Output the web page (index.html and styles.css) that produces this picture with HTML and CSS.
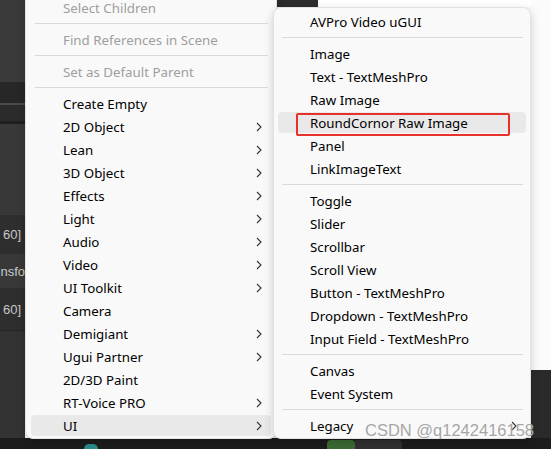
FILE: index.html
```html
<!DOCTYPE html>
<html>
<head>
<meta charset="utf-8">
<link rel="stylesheet" href="styles.css">
</head>
<body>
<div class="scene">
  <div class="backdrop">
    <div class="left-strip">
      <div class="band b1"></div>
      <div class="band b2"></div>
      <div class="band b3"></div>
      <div class="band b4"></div>
      <div class="band b5"></div>
      <div class="band b6"></div>
      <div class="band b7"><span class="num">60]</span></div>
      <div class="band b8"><span class="cut">nsfo</span></div>
      <div class="band b9"><span class="num">60]</span></div>
      <div class="band b10"></div>
    </div>
    <div class="middle">
      <div class="top-row">
        <div class="t-light"></div>
        <div class="t-dark"></div>
        <div class="t-white"></div>
      </div>
    </div>
    <div class="right-strip">
      <div class="r-light"></div>
      <div class="r-dark"></div>
    </div>
    <div class="bottom-strip">
      <div class="teal"></div>
      <div class="green"></div>
      <div class="greybox"></div>
    </div>
  </div>

  <div class="menu menu-left">
    <div class="item disabled">Select Children</div>
    <div class="sep"></div>
    <div class="item disabled">Find References in Scene</div>
    <div class="sep"></div>
    <div class="item disabled">Set as Default Parent</div>
    <div class="sep"></div>
    <div class="item">Create Empty</div>
    <div class="item sub">2D Object<svg class="chev" viewBox="0 0 6 10"><polyline points="1,1 5,5 1,9"/></svg></div>
    <div class="item sub">Lean<svg class="chev" viewBox="0 0 6 10"><polyline points="1,1 5,5 1,9"/></svg></div>
    <div class="item sub">3D Object<svg class="chev" viewBox="0 0 6 10"><polyline points="1,1 5,5 1,9"/></svg></div>
    <div class="item sub">Effects<svg class="chev" viewBox="0 0 6 10"><polyline points="1,1 5,5 1,9"/></svg></div>
    <div class="item sub">Light<svg class="chev" viewBox="0 0 6 10"><polyline points="1,1 5,5 1,9"/></svg></div>
    <div class="item sub">Audio<svg class="chev" viewBox="0 0 6 10"><polyline points="1,1 5,5 1,9"/></svg></div>
    <div class="item sub">Video<svg class="chev" viewBox="0 0 6 10"><polyline points="1,1 5,5 1,9"/></svg></div>
    <div class="item sub">UI Toolkit<svg class="chev" viewBox="0 0 6 10"><polyline points="1,1 5,5 1,9"/></svg></div>
    <div class="item">Camera</div>
    <div class="item sub">Demigiant<svg class="chev" viewBox="0 0 6 10"><polyline points="1,1 5,5 1,9"/></svg></div>
    <div class="item sub">Ugui Partner<svg class="chev" viewBox="0 0 6 10"><polyline points="1,1 5,5 1,9"/></svg></div>
    <div class="item">2D/3D Paint</div>
    <div class="item sub">RT-Voice PRO<svg class="chev" viewBox="0 0 6 10"><polyline points="1,1 5,5 1,9"/></svg></div>
    <div class="item sub active">UI<svg class="chev" viewBox="0 0 6 10"><polyline points="1,1 5,5 1,9"/></svg></div>
  </div>

  <div class="menu menu-right">
    <div class="item">AVPro Video uGUI</div>
    <div class="sep"></div>
    <div class="item">Image</div>
    <div class="item">Text - TextMeshPro</div>
    <div class="item">Raw Image</div>
    <div class="item active">RoundCornor Raw Image<span class="mark"></span></div>
    <div class="item">Panel</div>
    <div class="item">LinkImageText</div>
    <div class="sep"></div>
    <div class="item">Toggle</div>
    <div class="item">Slider</div>
    <div class="item">Scrollbar</div>
    <div class="item">Scroll View</div>
    <div class="item">Button - TextMeshPro</div>
    <div class="item">Dropdown - TextMeshPro</div>
    <div class="item">Input Field - TextMeshPro</div>
    <div class="sep"></div>
    <div class="item">Canvas</div>
    <div class="item">Event System</div>
    <div class="sep"></div>
    <div class="item sub">Legacy<svg class="chev" viewBox="0 0 6 10"><polyline points="1,1 5,5 1,9"/></svg></div>
  </div>

  <div class="watermark">CSDN @q1242416158</div>
</div>
</body>
</html>
```

FILE: styles.css
```css
* { box-sizing: border-box; }
html, body { margin: 0; padding: 0; }
body { background: #1e1e1e; overflow: hidden; }

.scene {
  position: relative;
  width: 551px;
  height: 449px;
  overflow: hidden;
  font-family: "Noto Sans", "Open Sans", sans-serif;
}

/* ---------- backdrop ---------- */
.backdrop {
  display: grid;
  grid-template-columns: 25px 506px 20px;
  grid-template-rows: 438px 11px;
  width: 551px;
  height: 449px;
}
.left-strip {
  display: flex;
  flex-direction: column;
  font-family: "Liberation Sans", sans-serif;
  font-size: 13px;
  color: #c8c8c8;
  overflow: hidden;
}
.band { flex: none; position: relative; display: flex; align-items: center; }
.b1 { height: 82px; background: #3a3a3a; }
.b2 { height: 21px; background: #272727; }
.b3 { height: 2px; background: #4a4a4a; }
.b4 { height: 16px; background: #2b2b2b; }
.b5 { height: 3px; background: #1f1f1f; }
.b6 { height: 91px; background: #383838; }
.b7 { height: 39px; background: #2e2e2e; justify-content: flex-end; padding-right: 4px; }
.b8 { height: 34px; background: #383838; }
.b9 { height: 42px; background: #2e2e2e; justify-content: flex-end; padding-right: 4px; }
.b10 { flex: 1; background: #333333; border-top: 1px solid #252525; }
.cut { position: absolute; right: 0; white-space: nowrap; }

.middle { background: #f9f9f9; }
.top-row { display: flex; height: 7px; }
.t-light { width: 247px; background: #f9f9f9; }
.t-dark { width: 46px; background: #2d2d2d; }
.t-white { flex: 1; background: #ffffff; }

.right-strip { display: flex; flex-direction: column; }
.r-light { height: 370px; background: #fbfbfb; }
.r-dark { flex: 1; background: #2a2a2a; }

.bottom-strip {
  grid-column: 1 / 4;
  background: #1c1c1c;
  display: flex;
  align-items: flex-end;
}
.teal { margin-left: 84px; width: 14px; height: 5px; background: #2a8a8a; border-radius: 7px 7px 0 0; }
.green { margin-left: 229px; width: 28px; height: 9px; background: #3a6a33; border-radius: 4px 4px 0 0; }
.greybox { width: 47px; height: 9px; background: #303030; border-radius: 0 4px 0 0; }

/* ---------- menus ---------- */
.menu {
  position: absolute;
  background: #f9f9f9;
  border: 1px solid #e2e2e2;
  border-radius: 8px;
  box-shadow: 0 3px 10px rgba(0, 0, 0, 0.18);
  display: flex;
  flex-direction: column;
  font-size: 13.3px;
  color: #000;
}
.menu-left {
  left: 25px;
  top: -8px;
  width: 252px;
  padding: 3px 5px 1px 5px;
}
.menu-right {
  left: 273px;
  top: 7px;
  width: 258px;
  padding: 2px 4px 1px 4px;
}
.item {
  position: relative;
  height: 21px;
  margin: 1px 0;
  padding-left: 32px;
  display: flex;
  align-items: center;
  border-radius: 4px;
  white-space: nowrap;
}
.item.disabled { color: #9e9e9e; }
.item.active { background: #e9e9e9; }
.sep {
  height: 1px;
  background: #dadada;
  margin: 4px 3px 4px 4px;
}
.chev {
  position: absolute;
  right: 9px;
  top: 6px;
  width: 6px;
  height: 10px;
  fill: none;
  stroke: #333;
  stroke-width: 1.1;
}
.mark {
  position: absolute;
  left: 18px;
  top: 1px;
  width: 214px;
  height: 23px;
  border: 2px solid #e8302c;
  border-radius: 2px;
}

.watermark {
  position: absolute;
  left: 365px;
  top: 421px;
  font-family: "Liberation Sans", sans-serif;
  font-size: 16.5px;
  color: #a6a6a6;
  white-space: nowrap;
  text-shadow: 0 0 1px rgba(255,255,255,0.4);
}
```
